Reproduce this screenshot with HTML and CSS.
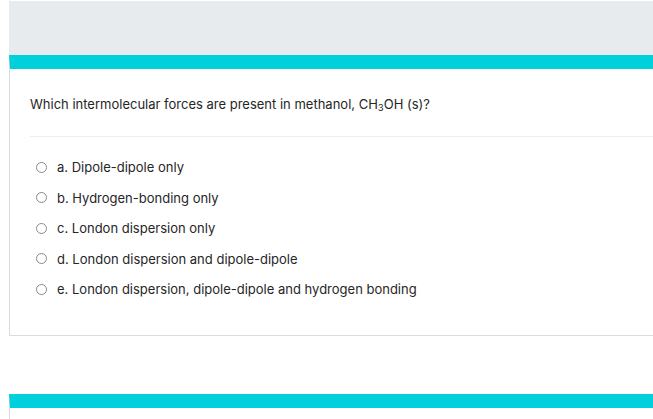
FILE: index.html
```html
<!DOCTYPE html>
<html>
<head>
<meta charset="utf-8">
<link rel="stylesheet" href="styles.css">
</head>
<body>
<div class="page">
  <div class="topbar"></div>
  <div class="card">
    <div class="question">Which intermolecular forces are present in methanol, CH<sub>3</sub>OH (s)?</div>
    <div class="answers">
      <label class="option"><span class="radio"></span>a. Dipole-dipole only</label>
      <label class="option"><span class="radio"></span>b. Hydrogen-bonding only</label>
      <label class="option"><span class="radio"></span>c. London dispersion only</label>
      <label class="option"><span class="radio"></span>d. London dispersion and dipole-dipole</label>
      <label class="option"><span class="radio"></span>e. London dispersion, dipole-dipole and hydrogen bonding</label>
    </div>
  </div>
  <div class="card next"></div>
</div>
</body>
</html>
```
FILE: styles.css
```css
html, body {
  margin: 0;
  padding: 0;
  background: #fff;
  overflow: hidden;
}
body {
  font-family: Inter, "Noto Sans", sans-serif;
  color: #262626;
  font-size: 13px;
}
.page {
  padding: 1px 0 0 9px;
  height: 418px;
}
.topbar {
  height: 54px;
  background: #e8ebee;
}
.card {
  border-top: 14px solid #00cfdc;
  border-left: 1px solid #dcdcdf;
  border-bottom: 1px solid #dcdcdf;
  background: #fff;
  padding: 0 0 0 20px;
}
.question {
  padding: 26px 0 23px 0;
  line-height: 18px;
  border-bottom: 1px solid #eceef0;
}
.question sub {
  font-size: 9.5px;
  vertical-align: -2px;
  line-height: 0;
}
.answers {
  display: flex;
  flex-direction: column;
  padding: 21px 0 37px 0;
  gap: 12.6px;
}
.option {
  display: flex;
  align-items: center;
  height: 18px;
  line-height: 18px;
}
.radio {
  width: 9px;
  height: 9px;
  border: 1px solid #8a8a8e;
  border-radius: 50%;
  margin: 0 10px 0 6px;
  box-sizing: content-box;
}
.card.next {
  margin-top: 58px;
  height: 11px;
  border-bottom: none;
}
```
